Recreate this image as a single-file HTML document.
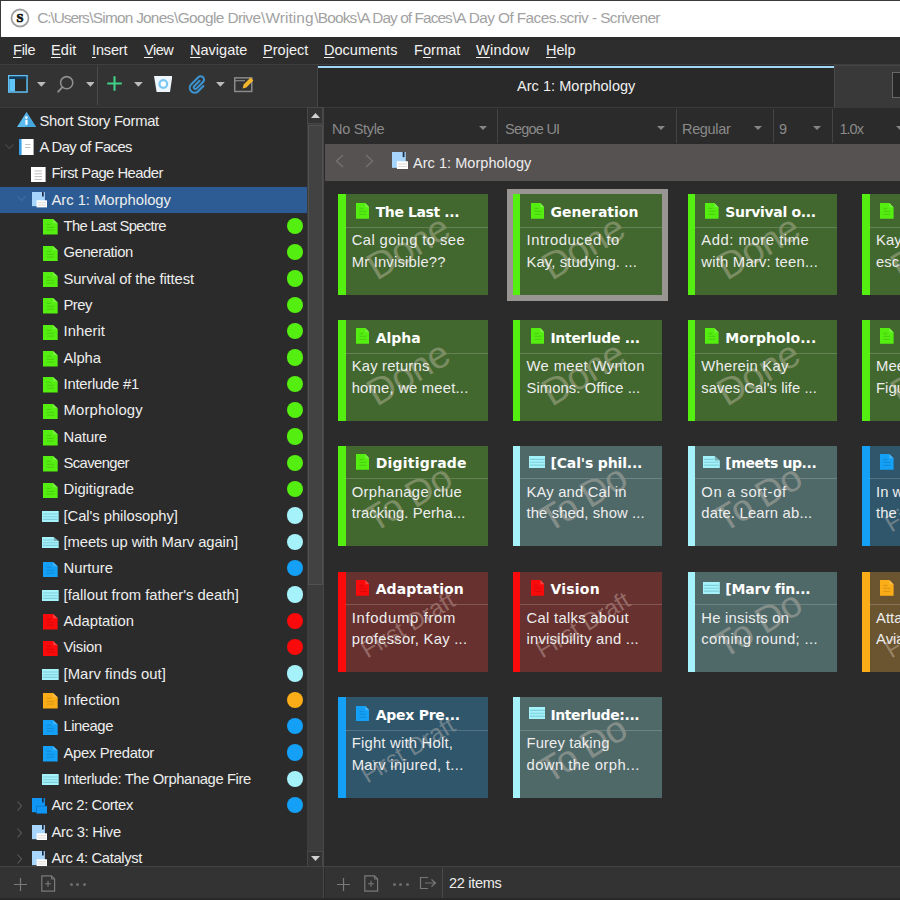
<!DOCTYPE html>
<html lang="en">
<head>
<meta charset="utf-8">
<title>A Day Of Faces.scriv - Scrivener</title>
<style>
html,body{margin:0;padding:0;}
body{width:900px;height:900px;overflow:hidden;position:relative;background:#2b2b2b;font-family:"Liberation Sans",sans-serif;color:#e6e6e6;}
div,span,svg{position:absolute;box-sizing:border-box;}
.t{white-space:nowrap;line-height:20px;height:20px;}
.title{font-size:15.4px;color:#a2a2a2;}
.menu{font-size:14.5px;color:#f2f2f2;}
.menu u{text-decoration:underline;text-underline-offset:2px;text-decoration-thickness:1px;}
.tab{font-size:14.5px;color:#f0f0f0;}
.bind{font-size:14.8px;color:#eeeeee;}
.fmt{font-size:14.5px;color:#8a8a8a;}
.hdr{font-size:14.5px;color:#ededed;}
.foot{font-size:14.5px;color:#ededed;}
.ct{font-family:"DejaVu Sans","Liberation Sans",sans-serif;font-weight:bold;font-size:14px;color:#fff;}
.cb{font-size:14.8px;color:#eeeeee;}
.wm{line-height:40px;height:40px;transform-origin:0 0;transform:rotate(-31deg) translate(-50%,-50%);}
.card{width:149.6px;height:100.5px;overflow:hidden;}
.card .stripe{left:0;top:0;width:7.5px;height:100%;}
.card .sep{left:7px;right:0;top:32.5px;height:1px;background:#ffffff2e;}

</style>
</head>
<body>
<div style="left:0;top:0;width:900px;height:37px;background:#fff"></div>
<div style="left:0;top:0;width:900px;height:1px;background:#3a3a3a"></div>
<div style="left:0;top:0;width:1px;height:37px;background:#3a3a3a"></div>
<svg style="left:10.3px;top:8.2px" width="20" height="20" viewBox="0 0 20 20"><circle cx="10" cy="10" r="8.5" fill="#fff" stroke="#a2a2a2" stroke-width="1.8"/><text x="10" y="14.1" text-anchor="middle" font-family="Liberation Serif,serif" font-weight="bold" font-size="12.5" fill="#111" stroke="#111" stroke-width="0.7">S</text></svg>
<span class="t title" style="left:37.3px;top:8.4px;letter-spacing:-1.057px;">C:\Users</span>
<span class="t title" style="left:89.3px;top:8.4px;letter-spacing:-0.762px;">\Simon Jones</span>
<span class="t title" style="left:174px;top:8.4px;letter-spacing:-0.593px;">\Google Drive</span>
<span class="t title" style="left:261px;top:8.4px;letter-spacing:0.101px;">\Writing</span>
<span class="t title" style="left:314.3px;top:8.4px;letter-spacing:-0.827px;">\Books</span>
<span class="t title" style="left:357px;top:8.4px;letter-spacing:-0.916px;">\A Day of Faces</span>
<span class="t title" style="left:452.5px;top:8.4px;letter-spacing:-0.583px;">\A Day Of Faces.scriv - Scrivener</span>
<div style="left:0;top:37px;width:900px;height:27px;background:#2d2d2d"></div>
<span class="t menu" style="left:13px;top:40px;letter-spacing:-0.244px;"><u>F</u>ile</span>
<span class="t menu" style="left:51px;top:40px;letter-spacing:0.100px;"><u>E</u>dit</span>
<span class="t menu" style="left:92px;top:40px;letter-spacing:-0.147px;"><u>I</u>nsert</span>
<span class="t menu" style="left:144px;top:40px;letter-spacing:-0.447px;"><u>V</u>iew</span>
<span class="t menu" style="left:190px;top:40px;letter-spacing:0.019px;"><u>N</u>avigate</span>
<span class="t menu" style="left:263px;top:40px;letter-spacing:0.037px;"><u>P</u>roject</span>
<span class="t menu" style="left:324px;top:40px;letter-spacing:0.005px;"><u>D</u>ocuments</span>
<span class="t menu" style="left:414px;top:40px;letter-spacing:0.077px;">F<u>o</u>rmat</span>
<span class="t menu" style="left:476px;top:40px;letter-spacing:0.304px;"><u>W</u>indow</span>
<span class="t menu" style="left:546px;top:40px;letter-spacing:-0.111px;"><u>H</u>elp</span>
<div style="left:0;top:64px;width:900px;height:43px;background:#333333"></div>
<div style="left:0;top:64px;width:900px;height:1px;background:#3e3e3e"></div>
<div style="left:97px;top:66px;width:1px;height:39px;background:#4a4a4a"></div>
<div style="left:318px;top:65px;width:516px;height:42px;background:#292929"></div>
<div style="left:317px;top:65px;width:1px;height:42px;background:#454545"></div>
<div style="left:318px;top:65.5px;width:516px;height:2.6px;background:#a0d8f6"></div>
<div style="left:834px;top:65px;width:66px;height:42px;background:#393939;border-left:1px solid #4a4a4a;border-top:1px solid #444"></div>
<div style="left:892px;top:72px;width:10px;height:26px;background:#262626;border:1px solid #666"></div>
<span class="t tab" style="left:517px;top:76px;letter-spacing:0.043px;">Arc 1: Morphology</span>
<svg style="left:8px;top:74.9px" width="19.8" height="17.8" viewBox="0 0 19.8 17.8"><rect x="0.75" y="0.75" width="18.3" height="16.3" fill="#2a2a2a" stroke="#5fc0f5" stroke-width="1.5"/><rect x="1.5" y="1.6" width="16.8" height="2.4" fill="#0e3d60"/><rect x="1.4" y="4" width="5.6" height="12.4" fill="#5fc4f7"/></svg>
<svg style="left:37.2px;top:81.9px" width="8.8" height="4.8" viewBox="0 0 8.8 4.8"><path d="M0 0H8.8L4.4 4.8Z" fill="#bcbcbc"/></svg>
<svg style="left:85.5px;top:81.9px" width="8.8" height="4.8" viewBox="0 0 8.8 4.8"><path d="M0 0H8.8L4.4 4.8Z" fill="#bcbcbc"/></svg>
<svg style="left:134px;top:81.9px" width="8.8" height="4.8" viewBox="0 0 8.8 4.8"><path d="M0 0H8.8L4.4 4.8Z" fill="#bcbcbc"/></svg>
<svg style="left:216.3px;top:81.9px" width="8.8" height="4.8" viewBox="0 0 8.8 4.8"><path d="M0 0H8.8L4.4 4.8Z" fill="#bcbcbc"/></svg>
<svg style="left:56px;top:74px" width="20" height="20" viewBox="0 0 20 20"><circle cx="10.7" cy="8.7" r="6.1" fill="none" stroke="#8e8e8e" stroke-width="1.6"/><path d="M6.4 13.2L2.2 17.7" stroke="#8e8e8e" stroke-width="1.9" stroke-linecap="round"/></svg>
<svg style="left:107.2px;top:76.4px" width="15" height="15" viewBox="0 0 15 15"><path d="M7.5 0.2V14.8M0.2 7.5H14.8" stroke="#40d088" stroke-width="2.1"/></svg>
<svg style="left:153.9px;top:75.8px" width="18.4" height="16" viewBox="0 0 18.4 16"><path d="M0 0H18.4L16 16H2.6Z" fill="#edf6fc"/><circle cx="9.3" cy="8" r="3.8" fill="#fff" stroke="#7cc8f4" stroke-width="2.2"/></svg>
<svg style="left:187px;top:74px" width="20" height="20" viewBox="0 0 20 20"><path d="M12.6 6.8L7.2 12.2a1.6 1.6 0 0 0 2.3 2.3L16 8a3.3 3.3 0 0 0-4.7-4.7L3.9 10.7a4.9 4.9 0 0 0 6.9 6.9L16.4 12" fill="none" stroke="#3c93cf" stroke-width="2.1" stroke-linecap="round"/></svg>
<svg style="left:234.4px;top:74px" width="21" height="19" viewBox="0 0 21 19"><rect x="0.75" y="3.85" width="17" height="13.6" fill="none" stroke="#8a8a8a" stroke-width="1.5"/><path d="M1 6.7H11" stroke="#8a8a8a" stroke-width="1.2"/><path d="M9.6 10.6L16.6 3.6L19.4 6.4L12.4 13.4L8.6 14.4Z" fill="#f0b62e"/></svg>
<div style="left:0;top:107px;width:307px;height:759px;background:#2b2b2b"></div>
<div style="left:0;top:107px;width:900px;height:1px;background:#3a3a3a"></div>
<div style="left:0;top:186.6px;width:307px;height:26.4px;background:#2c5c93"></div>
<span class="t bind" style="left:39.5px;top:110.5px;letter-spacing:-0.311px;">Short Story Format</span>
<svg style="left:17px;top:112.3px" width="19" height="15" viewBox="0 0 19 15"><path d="M9.5 0L19 15H0Z" fill="#5bbcf0"/><path d="M9.5 0L19 15H9.5Z" fill="#46a6e0"/><circle cx="9.5" cy="5.6" r="1.3" fill="#fff"/><path d="M9.5 7.8V12.8" stroke="#fff" stroke-width="2.2"/></svg>
<span class="t bind" style="left:39.5px;top:136.8px;letter-spacing:-0.567px;">A Day of Faces</span>
<svg style="left:19px;top:139.4px" width="14.6" height="16" viewBox="0 0 14.6 16"><rect x="0" y="0" width="14.6" height="16" fill="#fff"/><rect x="0" y="0" width="2.6" height="16" fill="#3a9fe4"/><path d="M6 5.5H11.5M6 8.5H11.5" stroke="#c4c4c4" stroke-width="1"/></svg>
<span class="t bind" style="left:51.5px;top:163.2px;letter-spacing:-0.510px;">First Page Header</span>
<svg style="left:31px;top:166.6px" width="14.6" height="15.6" viewBox="0 0 14.6 15.6"><rect x="0" y="0" width="14.6" height="15.6" fill="#fff"/><path d="M3.5 4H11M3.5 6.8H11M3.5 9.6H11M3.5 12.4H11" stroke="#bdbdbd" stroke-width="1"/></svg>
<span class="t bind" style="left:51.5px;top:189.5px;letter-spacing:-0.040px;">Arc 1: Morphology</span>
<svg style="left:32.1px;top:192.4px" width="15" height="15.4" viewBox="0 0 15 15.4" preserveAspectRatio="none"><path d="M0 0H12.9V14.2H0Z" fill="#a8d5fb"/><path d="M10 0H11.7V4.6H10Z" fill="#1c2c44"/><rect x="4.6" y="8.3" width="10.4" height="7.1" fill="#ffffff"/><path d="M5.6 10.7H14M5.6 13H14" stroke="#dcd6d0" stroke-width="0.9"/></svg>
<span class="t bind" style="left:63.5px;top:215.9px;letter-spacing:-0.643px;">The Last Spectre</span>
<svg style="left:43.1px;top:219.3px" width="14.7" height="15.6" viewBox="0 0 14.7 15.6" preserveAspectRatio="none"><path d="M0 0H10.2L14.7 4.2V15.6H0Z" fill="#55ee11"/><path d="M10.2 0V4.2H14.7Z" fill="#ffffff38"/><path d="M3.6 5.4H8M3.6 8.3H11.2M3.6 11.2H11.2" stroke="#0000001c" stroke-width="1.3"/></svg>
<div style="left:287px;top:217.6px;width:16.4px;height:16.4px;border-radius:50%;background:#55ee11"></div>
<span class="t bind" style="left:63.5px;top:242.2px;letter-spacing:-0.382px;">Generation</span>
<svg style="left:43.1px;top:245.6px" width="14.7" height="15.6" viewBox="0 0 14.7 15.6" preserveAspectRatio="none"><path d="M0 0H10.2L14.7 4.2V15.6H0Z" fill="#55ee11"/><path d="M10.2 0V4.2H14.7Z" fill="#ffffff38"/><path d="M3.6 5.4H8M3.6 8.3H11.2M3.6 11.2H11.2" stroke="#0000001c" stroke-width="1.3"/></svg>
<div style="left:287px;top:243.9px;width:16.4px;height:16.4px;border-radius:50%;background:#55ee11"></div>
<span class="t bind" style="left:63.5px;top:268.5px;letter-spacing:-0.123px;">Survival of the fittest</span>
<svg style="left:43.1px;top:271.9px" width="14.7" height="15.6" viewBox="0 0 14.7 15.6" preserveAspectRatio="none"><path d="M0 0H10.2L14.7 4.2V15.6H0Z" fill="#55ee11"/><path d="M10.2 0V4.2H14.7Z" fill="#ffffff38"/><path d="M3.6 5.4H8M3.6 8.3H11.2M3.6 11.2H11.2" stroke="#0000001c" stroke-width="1.3"/></svg>
<div style="left:287px;top:270.2px;width:16.4px;height:16.4px;border-radius:50%;background:#55ee11"></div>
<span class="t bind" style="left:63.5px;top:294.9px;letter-spacing:-0.509px;">Prey</span>
<svg style="left:43.1px;top:298.3px" width="14.7" height="15.6" viewBox="0 0 14.7 15.6" preserveAspectRatio="none"><path d="M0 0H10.2L14.7 4.2V15.6H0Z" fill="#55ee11"/><path d="M10.2 0V4.2H14.7Z" fill="#ffffff38"/><path d="M3.6 5.4H8M3.6 8.3H11.2M3.6 11.2H11.2" stroke="#0000001c" stroke-width="1.3"/></svg>
<div style="left:287px;top:296.6px;width:16.4px;height:16.4px;border-radius:50%;background:#55ee11"></div>
<span class="t bind" style="left:63.5px;top:321.2px;letter-spacing:0.039px;">Inherit</span>
<svg style="left:43.1px;top:324.6px" width="14.7" height="15.6" viewBox="0 0 14.7 15.6" preserveAspectRatio="none"><path d="M0 0H10.2L14.7 4.2V15.6H0Z" fill="#55ee11"/><path d="M10.2 0V4.2H14.7Z" fill="#ffffff38"/><path d="M3.6 5.4H8M3.6 8.3H11.2M3.6 11.2H11.2" stroke="#0000001c" stroke-width="1.3"/></svg>
<div style="left:287px;top:322.9px;width:16.4px;height:16.4px;border-radius:50%;background:#55ee11"></div>
<span class="t bind" style="left:63.5px;top:347.6px;letter-spacing:-0.092px;">Alpha</span>
<svg style="left:43.1px;top:351.0px" width="14.7" height="15.6" viewBox="0 0 14.7 15.6" preserveAspectRatio="none"><path d="M0 0H10.2L14.7 4.2V15.6H0Z" fill="#55ee11"/><path d="M10.2 0V4.2H14.7Z" fill="#ffffff38"/><path d="M3.6 5.4H8M3.6 8.3H11.2M3.6 11.2H11.2" stroke="#0000001c" stroke-width="1.3"/></svg>
<div style="left:287px;top:349.3px;width:16.4px;height:16.4px;border-radius:50%;background:#55ee11"></div>
<span class="t bind" style="left:63.5px;top:373.9px;letter-spacing:-0.230px;">Interlude #1</span>
<svg style="left:43.1px;top:377.3px" width="14.7" height="15.6" viewBox="0 0 14.7 15.6" preserveAspectRatio="none"><path d="M0 0H10.2L14.7 4.2V15.6H0Z" fill="#55ee11"/><path d="M10.2 0V4.2H14.7Z" fill="#ffffff38"/><path d="M3.6 5.4H8M3.6 8.3H11.2M3.6 11.2H11.2" stroke="#0000001c" stroke-width="1.3"/></svg>
<div style="left:287px;top:375.6px;width:16.4px;height:16.4px;border-radius:50%;background:#55ee11"></div>
<span class="t bind" style="left:63.5px;top:400.2px;letter-spacing:0.207px;">Morphology</span>
<svg style="left:43.1px;top:403.6px" width="14.7" height="15.6" viewBox="0 0 14.7 15.6" preserveAspectRatio="none"><path d="M0 0H10.2L14.7 4.2V15.6H0Z" fill="#55ee11"/><path d="M10.2 0V4.2H14.7Z" fill="#ffffff38"/><path d="M3.6 5.4H8M3.6 8.3H11.2M3.6 11.2H11.2" stroke="#0000001c" stroke-width="1.3"/></svg>
<div style="left:287px;top:401.9px;width:16.4px;height:16.4px;border-radius:50%;background:#55ee11"></div>
<span class="t bind" style="left:63.5px;top:426.6px;letter-spacing:-0.170px;">Nature</span>
<svg style="left:43.1px;top:430.0px" width="14.7" height="15.6" viewBox="0 0 14.7 15.6" preserveAspectRatio="none"><path d="M0 0H10.2L14.7 4.2V15.6H0Z" fill="#55ee11"/><path d="M10.2 0V4.2H14.7Z" fill="#ffffff38"/><path d="M3.6 5.4H8M3.6 8.3H11.2M3.6 11.2H11.2" stroke="#0000001c" stroke-width="1.3"/></svg>
<div style="left:287px;top:428.3px;width:16.4px;height:16.4px;border-radius:50%;background:#55ee11"></div>
<span class="t bind" style="left:63.5px;top:452.9px;letter-spacing:-0.594px;">Scavenger</span>
<svg style="left:43.1px;top:456.3px" width="14.7" height="15.6" viewBox="0 0 14.7 15.6" preserveAspectRatio="none"><path d="M0 0H10.2L14.7 4.2V15.6H0Z" fill="#55ee11"/><path d="M10.2 0V4.2H14.7Z" fill="#ffffff38"/><path d="M3.6 5.4H8M3.6 8.3H11.2M3.6 11.2H11.2" stroke="#0000001c" stroke-width="1.3"/></svg>
<div style="left:287px;top:454.6px;width:16.4px;height:16.4px;border-radius:50%;background:#55ee11"></div>
<span class="t bind" style="left:63.5px;top:479.3px;letter-spacing:-0.030px;">Digitigrade</span>
<svg style="left:43.1px;top:482.7px" width="14.7" height="15.6" viewBox="0 0 14.7 15.6" preserveAspectRatio="none"><path d="M0 0H10.2L14.7 4.2V15.6H0Z" fill="#55ee11"/><path d="M10.2 0V4.2H14.7Z" fill="#ffffff38"/><path d="M3.6 5.4H8M3.6 8.3H11.2M3.6 11.2H11.2" stroke="#0000001c" stroke-width="1.3"/></svg>
<div style="left:287px;top:481.0px;width:16.4px;height:16.4px;border-radius:50%;background:#55ee11"></div>
<span class="t bind" style="left:63.5px;top:505.6px;letter-spacing:-0.062px;">[Cal's philosophy]</span>
<svg style="left:42px;top:510.7px" width="16.7" height="11.1" viewBox="0 0 16.7 11.1" preserveAspectRatio="none"><path d="M0 0H16.7V11.1H0Z" fill="#a6f2fb"/><path d="M1 3H15.7M1 5.7H15.7M1 8.4H15.7" stroke="#7ccfdc" stroke-width="1.1"/></svg>
<div style="left:287px;top:507.3px;width:16.4px;height:16.4px;border-radius:50%;background:#a6f2fb"></div>
<span class="t bind" style="left:63.5px;top:531.9px;letter-spacing:-0.093px;">[meets up with Marv again]</span>
<svg style="left:42px;top:537.0px" width="16.7" height="11.1" viewBox="0 0 16.7 11.1" preserveAspectRatio="none"><path d="M0 0H11.7L16.7 4V11.1H0Z" fill="#a6f2fb"/><path d="M11.7 0V4H16.7Z" fill="#00000045"/><path d="M1 3H10.7M1 5.7H15.7M1 8.4H15.7" stroke="#7ccfdc" stroke-width="1.1"/></svg>
<div style="left:287px;top:533.6px;width:16.4px;height:16.4px;border-radius:50%;background:#a6f2fb"></div>
<span class="t bind" style="left:63.5px;top:558.3px;letter-spacing:0.008px;">Nurture</span>
<svg style="left:43.1px;top:561.7px" width="14.7" height="15.6" viewBox="0 0 14.7 15.6" preserveAspectRatio="none"><path d="M0 0H10.2L14.7 4.2V15.6H0Z" fill="#14a0f6"/><path d="M10.2 0V4.2H14.7Z" fill="#ffffff38"/><path d="M3.6 5.4H8M3.6 8.3H11.2M3.6 11.2H11.2" stroke="#0000001c" stroke-width="1.3"/></svg>
<div style="left:287px;top:560.0px;width:16.4px;height:16.4px;border-radius:50%;background:#14a0f6"></div>
<span class="t bind" style="left:63.5px;top:584.6px;letter-spacing:0.023px;">[fallout from father's death]</span>
<svg style="left:42px;top:589.7px" width="16.7" height="11.1" viewBox="0 0 16.7 11.1" preserveAspectRatio="none"><path d="M0 0H16.7V11.1H0Z" fill="#a6f2fb"/><path d="M1 3H15.7M1 5.7H15.7M1 8.4H15.7" stroke="#7ccfdc" stroke-width="1.1"/></svg>
<div style="left:287px;top:586.3px;width:16.4px;height:16.4px;border-radius:50%;background:#a6f2fb"></div>
<span class="t bind" style="left:63.5px;top:611.0px;letter-spacing:-0.037px;">Adaptation</span>
<svg style="left:43.1px;top:614.4px" width="14.7" height="15.6" viewBox="0 0 14.7 15.6" preserveAspectRatio="none"><path d="M0 0H10.2L14.7 4.2V15.6H0Z" fill="#fa0a0a"/><path d="M10.2 0V4.2H14.7Z" fill="#ffffff38"/><path d="M3.6 5.4H8M3.6 8.3H11.2M3.6 11.2H11.2" stroke="#0000001c" stroke-width="1.3"/></svg>
<div style="left:287px;top:612.7px;width:16.4px;height:16.4px;border-radius:50%;background:#fa0a0a"></div>
<span class="t bind" style="left:63.5px;top:637.3px;letter-spacing:-0.274px;">Vision</span>
<svg style="left:43.1px;top:640.7px" width="14.7" height="15.6" viewBox="0 0 14.7 15.6" preserveAspectRatio="none"><path d="M0 0H10.2L14.7 4.2V15.6H0Z" fill="#fa0a0a"/><path d="M10.2 0V4.2H14.7Z" fill="#ffffff38"/><path d="M3.6 5.4H8M3.6 8.3H11.2M3.6 11.2H11.2" stroke="#0000001c" stroke-width="1.3"/></svg>
<div style="left:287px;top:639.0px;width:16.4px;height:16.4px;border-radius:50%;background:#fa0a0a"></div>
<span class="t bind" style="left:63.5px;top:663.6px;letter-spacing:0.078px;">[Marv finds out]</span>
<svg style="left:42px;top:668.7px" width="16.7" height="11.1" viewBox="0 0 16.7 11.1" preserveAspectRatio="none"><path d="M0 0H16.7V11.1H0Z" fill="#a6f2fb"/><path d="M1 3H15.7M1 5.7H15.7M1 8.4H15.7" stroke="#7ccfdc" stroke-width="1.1"/></svg>
<div style="left:287px;top:665.3px;width:16.4px;height:16.4px;border-radius:50%;background:#a6f2fb"></div>
<span class="t bind" style="left:63.5px;top:690.0px;letter-spacing:0.051px;">Infection</span>
<svg style="left:43.1px;top:693.4px" width="14.7" height="15.6" viewBox="0 0 14.7 15.6" preserveAspectRatio="none"><path d="M0 0H10.2L14.7 4.2V15.6H0Z" fill="#fbad18"/><path d="M10.2 0V4.2H14.7Z" fill="#ffffff38"/><path d="M3.6 5.4H8M3.6 8.3H11.2M3.6 11.2H11.2" stroke="#0000001c" stroke-width="1.3"/></svg>
<div style="left:287px;top:691.7px;width:16.4px;height:16.4px;border-radius:50%;background:#fbad18"></div>
<span class="t bind" style="left:63.5px;top:716.3px;letter-spacing:-0.467px;">Lineage</span>
<svg style="left:43.1px;top:719.7px" width="14.7" height="15.6" viewBox="0 0 14.7 15.6" preserveAspectRatio="none"><path d="M0 0H10.2L14.7 4.2V15.6H0Z" fill="#14a0f6"/><path d="M10.2 0V4.2H14.7Z" fill="#ffffff38"/><path d="M3.6 5.4H8M3.6 8.3H11.2M3.6 11.2H11.2" stroke="#0000001c" stroke-width="1.3"/></svg>
<div style="left:287px;top:718.0px;width:16.4px;height:16.4px;border-radius:50%;background:#14a0f6"></div>
<span class="t bind" style="left:63.5px;top:742.7px;letter-spacing:-0.323px;">Apex Predator</span>
<svg style="left:43.1px;top:746.1px" width="14.7" height="15.6" viewBox="0 0 14.7 15.6" preserveAspectRatio="none"><path d="M0 0H10.2L14.7 4.2V15.6H0Z" fill="#14a0f6"/><path d="M10.2 0V4.2H14.7Z" fill="#ffffff38"/><path d="M3.6 5.4H8M3.6 8.3H11.2M3.6 11.2H11.2" stroke="#0000001c" stroke-width="1.3"/></svg>
<div style="left:287px;top:744.4px;width:16.4px;height:16.4px;border-radius:50%;background:#14a0f6"></div>
<span class="t bind" style="left:63.5px;top:769.0px;letter-spacing:-0.393px;">Interlude: The Orphanage Fire</span>
<svg style="left:42px;top:774.1px" width="16.7" height="11.1" viewBox="0 0 16.7 11.1" preserveAspectRatio="none"><path d="M0 0H16.7V11.1H0Z" fill="#a6f2fb"/><path d="M1 3H15.7M1 5.7H15.7M1 8.4H15.7" stroke="#7ccfdc" stroke-width="1.1"/></svg>
<div style="left:287px;top:770.7px;width:16.4px;height:16.4px;border-radius:50%;background:#a6f2fb"></div>
<span class="t bind" style="left:51.5px;top:795.3px;letter-spacing:-0.380px;">Arc 2: Cortex</span>
<svg style="left:32.1px;top:798.2px" width="15" height="15.4" viewBox="0 0 15 15.4" preserveAspectRatio="none"><path d="M0 0H12.9V14.2H0Z" fill="#1097f5"/><path d="M10 0H11.7V4.6H10Z" fill="#1c2c44"/><rect x="4.1" y="7.8" width="10.9" height="7.6" fill="#0b6fc2"/><rect x="4.8" y="8.5" width="10.2" height="6.9" fill="#1097f5"/></svg>
<div style="left:287px;top:797.0px;width:16.4px;height:16.4px;border-radius:50%;background:#14a0f6"></div>
<span class="t bind" style="left:51.5px;top:821.7px;letter-spacing:-0.269px;">Arc 3: Hive</span>
<svg style="left:32.1px;top:824.6px" width="15" height="15.4" viewBox="0 0 15 15.4" preserveAspectRatio="none"><path d="M0 0H12.9V14.2H0Z" fill="#a8d5fb"/><path d="M10 0H11.7V4.6H10Z" fill="#1c2c44"/><rect x="4.6" y="8.3" width="10.4" height="7.1" fill="#ffffff"/><path d="M5.6 10.7H14M5.6 13H14" stroke="#dcd6d0" stroke-width="0.9"/></svg>
<span class="t bind" style="left:51.5px;top:848.0px;letter-spacing:-0.388px;">Arc 4: Catalyst</span>
<svg style="left:32.1px;top:850.9px" width="15" height="15.4" viewBox="0 0 15 15.4" preserveAspectRatio="none"><path d="M0 0H12.9V14.2H0Z" fill="#a8d5fb"/><path d="M10 0H11.7V4.6H10Z" fill="#1c2c44"/><rect x="4.6" y="8.3" width="10.4" height="7.1" fill="#ffffff"/><path d="M5.6 10.7H14M5.6 13H14" stroke="#dcd6d0" stroke-width="0.9"/></svg>
<svg style="left:5px;top:143.7px" width="9" height="6" viewBox="0 0 9 6"><path d="M0.5 0.5L4.5 4.5L8.5 0.5" fill="none" stroke="#474747" stroke-width="1.1"/></svg>
<svg style="left:17px;top:196.4px" width="9" height="6" viewBox="0 0 9 6"><path d="M0.5 0.5L4.5 4.5L8.5 0.5" fill="none" stroke="#3f6ca4" stroke-width="1.1"/></svg>
<svg style="left:17px;top:801.2px" width="6" height="10" viewBox="0 0 6 10"><path d="M0.5 0.5L4.5 5L0.5 9.5" fill="none" stroke="#5c5c5c" stroke-width="1.1"/></svg>
<svg style="left:17px;top:827.6px" width="6" height="10" viewBox="0 0 6 10"><path d="M0.5 0.5L4.5 5L0.5 9.5" fill="none" stroke="#5c5c5c" stroke-width="1.1"/></svg>
<svg style="left:17px;top:853.9px" width="6" height="10" viewBox="0 0 6 10"><path d="M0.5 0.5L4.5 5L0.5 9.5" fill="none" stroke="#5c5c5c" stroke-width="1.1"/></svg>
<div style="left:307.4px;top:107px;width:16px;height:759.5px;background:#3c3c3c"></div>
<div style="left:307.4px;top:107px;width:16px;height:16.5px;background:#333;border:1px solid #474747"></div>
<svg style="left:310.6px;top:112.5px" width="9" height="5" viewBox="0 0 9 5"><path d="M0 5H9L4.5 0Z" fill="#d0d0d0"/></svg>
<div style="left:307.4px;top:851px;width:16px;height:15.5px;background:#333;border:1px solid #474747"></div>
<svg style="left:310.6px;top:856px" width="9" height="5" viewBox="0 0 9 5"><path d="M0 0H9L4.5 5Z" fill="#d0d0d0"/></svg>
<div style="left:308px;top:124.5px;width:15px;height:460px;background:#424242;border:1px solid #515151"></div>
<div style="left:0;top:866px;width:324px;height:34px;background:#333"></div>
<div style="left:0;top:866px;width:900px;height:1px;background:#444"></div>
<svg style="left:13px;top:876.5px" width="15" height="15" viewBox="0 0 15 15"><path d="M7.5 1V14M1 7.5H14" stroke="#7a7a7a" stroke-width="1.2"/></svg><svg style="left:41px;top:874.5px" width="15" height="17" viewBox="0 0 15 17"><path d="M0.8 0.8H10.4L13.6 4V16.2H0.8Z" fill="none" stroke="#7a7a7a" stroke-width="1.2"/><path d="M10.4 0.8V4H13.6" fill="none" stroke="#7a7a7a" stroke-width="1"/><path d="M7 5.8V11.8M4 8.8H10" stroke="#7a7a7a" stroke-width="1.1"/></svg><div style="left:70.0px;top:882.5px;width:3px;height:3px;border-radius:2px;background:#6e6e6e"></div><div style="left:76.3px;top:882.5px;width:3px;height:3px;border-radius:2px;background:#6e6e6e"></div><div style="left:82.6px;top:882.5px;width:3px;height:3px;border-radius:2px;background:#6e6e6e"></div>
<div style="left:323px;top:107px;width:1.4px;height:793px;background:#484848"></div>
<div style="left:325px;top:108px;width:575px;height:36px;background:#2b2b2b"></div>
<div style="left:497px;top:109px;width:1px;height:34px;background:#444"></div>
<div style="left:676px;top:109px;width:1px;height:34px;background:#444"></div>
<div style="left:773px;top:109px;width:1px;height:34px;background:#444"></div>
<div style="left:832px;top:109px;width:1px;height:34px;background:#444"></div>
<span class="t fmt" style="left:332px;top:119px;letter-spacing:-0.302px;">No Style</span>
<span class="t fmt" style="left:505px;top:119px;letter-spacing:-0.759px;">Segoe UI</span>
<span class="t fmt" style="left:682px;top:119px;letter-spacing:-0.340px;">Regular</span>
<span class="t fmt" style="left:779px;top:119px;letter-spacing:-0.678px;">9</span>
<span class="t fmt" style="left:839.5px;top:119px;letter-spacing:-1.005px;">1.0x</span>
<svg style="left:479px;top:126px" width="8" height="4" viewBox="0 0 8 4"><path d="M0 0H8L4.0 4Z" fill="#858585"/></svg>
<svg style="left:657px;top:126px" width="8" height="4" viewBox="0 0 8 4"><path d="M0 0H8L4.0 4Z" fill="#858585"/></svg>
<svg style="left:754px;top:126px" width="8" height="4" viewBox="0 0 8 4"><path d="M0 0H8L4.0 4Z" fill="#858585"/></svg>
<svg style="left:813px;top:126px" width="8" height="4" viewBox="0 0 8 4"><path d="M0 0H8L4.0 4Z" fill="#858585"/></svg>
<svg style="left:896px;top:126px" width="8" height="4" viewBox="0 0 8 4"><path d="M0 0H8L4.0 4Z" fill="#858585"/></svg>
<div style="left:325px;top:144px;width:575px;height:36.5px;background:#565252"></div>
<svg style="left:335px;top:154px" width="9" height="14" viewBox="0 0 9 14"><path d="M8 1L1.5 7L8 13" fill="none" stroke="#777171" stroke-width="1.4"/></svg>
<svg style="left:365px;top:154px" width="9" height="14" viewBox="0 0 9 14"><path d="M1 1L7.5 7L1 13" fill="none" stroke="#777171" stroke-width="1.4"/></svg>
<svg style="left:391.7px;top:152.2px" width="16" height="17.2" viewBox="0 0 15 15.4" preserveAspectRatio="none"><path d="M0 0H12.9V14.2H0Z" fill="#a8d5fb"/><path d="M10 0H11.7V4.6H10Z" fill="#1c2c44"/><rect x="4.6" y="8.3" width="10.4" height="7.1" fill="#ffffff"/><path d="M5.6 10.7H14M5.6 13H14" stroke="#dcd6d0" stroke-width="0.9"/></svg>
<span class="t hdr" style="left:413px;top:152.6px;letter-spacing:0.043px;">Arc 1: Morphology</span>
<div style="left:325px;top:181px;width:575px;height:685px;background:#2b2b2b"></div>
<div style="left:325px;top:867px;width:575px;height:33px;background:#333"></div>
<svg style="left:336px;top:876.5px" width="15" height="15" viewBox="0 0 15 15"><path d="M7.5 1V14M1 7.5H14" stroke="#7a7a7a" stroke-width="1.2"/></svg><svg style="left:364px;top:874.5px" width="15" height="17" viewBox="0 0 15 17"><path d="M0.8 0.8H10.4L13.6 4V16.2H0.8Z" fill="none" stroke="#7a7a7a" stroke-width="1.2"/><path d="M10.4 0.8V4H13.6" fill="none" stroke="#7a7a7a" stroke-width="1"/><path d="M7 5.8V11.8M4 8.8H10" stroke="#7a7a7a" stroke-width="1.1"/></svg><div style="left:393.0px;top:882.5px;width:3px;height:3px;border-radius:2px;background:#6e6e6e"></div><div style="left:399.3px;top:882.5px;width:3px;height:3px;border-radius:2px;background:#6e6e6e"></div><div style="left:405.6px;top:882.5px;width:3px;height:3px;border-radius:2px;background:#6e6e6e"></div>
<svg style="left:419px;top:876px" width="18" height="14" viewBox="0 0 18 14"><path d="M9 1.5H1.5V12.5H9" fill="none" stroke="#777" stroke-width="1.2"/><path d="M6 7H16M12.5 3.5L16.5 7L12.5 10.5" fill="none" stroke="#777" stroke-width="1.2"/></svg>
<div style="left:442px;top:868px;width:1px;height:31px;background:#4a4a4a"></div>
<span class="t foot" style="left:449px;top:873px;letter-spacing:-0.302px;">22 items</span>
<div class="card" style="left:338.0px;top:194.4px;background:#42672f">
<div class="stripe" style="background:#55ee11"></div>
<div class="sep"></div>
<span class="t wm" style="left:70px;top:53px;letter-spacing:-0.611px;font-size:38px;color:#7b8d63;">Done</span>
<svg style="left:17.8px;top:8.4px" width="13.6" height="15.8" viewBox="0 0 14.7 15.6" preserveAspectRatio="none"><path d="M0 0H10.2L14.7 4.2V15.6H0Z" fill="#55ee11"/><path d="M10.2 0V4.2H14.7Z" fill="#ffffff38"/><path d="M3.6 5.4H8M3.6 8.3H11.2M3.6 11.2H11.2" stroke="#0000001c" stroke-width="1.3"/></svg>
<span class="t ct" style="left:37.7px;top:7.5px;letter-spacing:-0.392px;">The Last ...</span>
<span class="t cb" style="left:13.7px;top:36.0px;letter-spacing:0.403px;">Cal going to see</span>
<span class="t cb" style="left:13.7px;top:57.6px;letter-spacing:0.194px;">Mr Invisible??</span>
</div>
<div style="left:506.9px;top:188.9px;width:161.3px;height:111.8px;background:#989592"></div>
<div class="card" style="left:512.8px;top:194.4px;background:#42672f">
<div class="stripe" style="background:#55ee11"></div>
<div class="sep"></div>
<span class="t wm" style="left:70px;top:53px;letter-spacing:-0.611px;font-size:38px;color:#7b8d63;">Done</span>
<svg style="left:17.8px;top:8.4px" width="13.6" height="15.8" viewBox="0 0 14.7 15.6" preserveAspectRatio="none"><path d="M0 0H10.2L14.7 4.2V15.6H0Z" fill="#55ee11"/><path d="M10.2 0V4.2H14.7Z" fill="#ffffff38"/><path d="M3.6 5.4H8M3.6 8.3H11.2M3.6 11.2H11.2" stroke="#0000001c" stroke-width="1.3"/></svg>
<span class="t ct" style="left:37.7px;top:7.5px;letter-spacing:0.011px;">Generation</span>
<span class="t cb" style="left:13.7px;top:36.0px;letter-spacing:0.539px;">Introduced to</span>
<span class="t cb" style="left:13.7px;top:57.6px;letter-spacing:0.117px;">Kay, studying. ...</span>
</div>
<div class="card" style="left:687.6px;top:194.4px;background:#42672f">
<div class="stripe" style="background:#55ee11"></div>
<div class="sep"></div>
<span class="t wm" style="left:70px;top:53px;letter-spacing:-0.611px;font-size:38px;color:#7b8d63;">Done</span>
<svg style="left:17.8px;top:8.4px" width="13.6" height="15.8" viewBox="0 0 14.7 15.6" preserveAspectRatio="none"><path d="M0 0H10.2L14.7 4.2V15.6H0Z" fill="#55ee11"/><path d="M10.2 0V4.2H14.7Z" fill="#ffffff38"/><path d="M3.6 5.4H8M3.6 8.3H11.2M3.6 11.2H11.2" stroke="#0000001c" stroke-width="1.3"/></svg>
<span class="t ct" style="left:37.7px;top:7.5px;letter-spacing:-0.331px;">Survival o...</span>
<span class="t cb" style="left:13.7px;top:36.0px;letter-spacing:0.548px;">Add: more time</span>
<span class="t cb" style="left:13.7px;top:57.6px;letter-spacing:0.224px;">with Marv: teen...</span>
</div>
<div class="card" style="left:862.4px;top:194.4px;background:#42672f">
<div class="stripe" style="background:#55ee11"></div>
<div class="sep"></div>
<span class="t wm" style="left:70px;top:53px;letter-spacing:-0.611px;font-size:38px;color:#7b8d63;">Done</span>
<svg style="left:17.8px;top:8.4px" width="13.6" height="15.8" viewBox="0 0 14.7 15.6" preserveAspectRatio="none"><path d="M0 0H10.2L14.7 4.2V15.6H0Z" fill="#55ee11"/><path d="M10.2 0V4.2H14.7Z" fill="#ffffff38"/><path d="M3.6 5.4H8M3.6 8.3H11.2M3.6 11.2H11.2" stroke="#0000001c" stroke-width="1.3"/></svg>
<span class="t cb" style="left:13.7px;top:36.0px;">Kay, st</span>
<span class="t cb" style="left:13.7px;top:57.6px;">escape</span>
</div>
<div class="card" style="left:338.0px;top:320.1px;background:#42672f">
<div class="stripe" style="background:#55ee11"></div>
<div class="sep"></div>
<span class="t wm" style="left:70px;top:53px;letter-spacing:-0.611px;font-size:38px;color:#7b8d63;">Done</span>
<svg style="left:17.8px;top:8.4px" width="13.6" height="15.8" viewBox="0 0 14.7 15.6" preserveAspectRatio="none"><path d="M0 0H10.2L14.7 4.2V15.6H0Z" fill="#55ee11"/><path d="M10.2 0V4.2H14.7Z" fill="#ffffff38"/><path d="M3.6 5.4H8M3.6 8.3H11.2M3.6 11.2H11.2" stroke="#0000001c" stroke-width="1.3"/></svg>
<span class="t ct" style="left:37.7px;top:7.5px;letter-spacing:-0.016px;">Alpha</span>
<span class="t cb" style="left:13.7px;top:36.0px;letter-spacing:0.193px;">Kay returns</span>
<span class="t cb" style="left:13.7px;top:57.6px;letter-spacing:0.206px;">home, we meet...</span>
</div>
<div class="card" style="left:512.8px;top:320.1px;background:#42672f">
<div class="stripe" style="background:#55ee11"></div>
<div class="sep"></div>
<span class="t wm" style="left:70px;top:53px;letter-spacing:-0.611px;font-size:38px;color:#7b8d63;">Done</span>
<svg style="left:17.8px;top:8.4px" width="13.6" height="15.8" viewBox="0 0 14.7 15.6" preserveAspectRatio="none"><path d="M0 0H10.2L14.7 4.2V15.6H0Z" fill="#55ee11"/><path d="M10.2 0V4.2H14.7Z" fill="#ffffff38"/><path d="M3.6 5.4H8M3.6 8.3H11.2M3.6 11.2H11.2" stroke="#0000001c" stroke-width="1.3"/></svg>
<span class="t ct" style="left:37.7px;top:7.5px;letter-spacing:-0.322px;">Interlude ...</span>
<span class="t cb" style="left:13.7px;top:36.0px;letter-spacing:0.372px;">We meet Wynton</span>
<span class="t cb" style="left:13.7px;top:57.6px;letter-spacing:0.073px;">Simons. Office ...</span>
</div>
<div class="card" style="left:687.6px;top:320.1px;background:#42672f">
<div class="stripe" style="background:#55ee11"></div>
<div class="sep"></div>
<span class="t wm" style="left:70px;top:53px;letter-spacing:-0.611px;font-size:38px;color:#7b8d63;">Done</span>
<svg style="left:17.8px;top:8.4px" width="13.6" height="15.8" viewBox="0 0 14.7 15.6" preserveAspectRatio="none"><path d="M0 0H10.2L14.7 4.2V15.6H0Z" fill="#55ee11"/><path d="M10.2 0V4.2H14.7Z" fill="#ffffff38"/><path d="M3.6 5.4H8M3.6 8.3H11.2M3.6 11.2H11.2" stroke="#0000001c" stroke-width="1.3"/></svg>
<span class="t ct" style="left:37.7px;top:7.5px;letter-spacing:0.060px;">Morpholo...</span>
<span class="t cb" style="left:13.7px;top:36.0px;letter-spacing:0.235px;">Wherein Kay</span>
<span class="t cb" style="left:13.7px;top:57.6px;letter-spacing:0.046px;">saves Cal's life ...</span>
</div>
<div class="card" style="left:862.4px;top:320.1px;background:#42672f">
<div class="stripe" style="background:#55ee11"></div>
<div class="sep"></div>
<span class="t wm" style="left:70px;top:53px;letter-spacing:-0.611px;font-size:38px;color:#7b8d63;">Done</span>
<svg style="left:17.8px;top:8.4px" width="13.6" height="15.8" viewBox="0 0 14.7 15.6" preserveAspectRatio="none"><path d="M0 0H10.2L14.7 4.2V15.6H0Z" fill="#55ee11"/><path d="M10.2 0V4.2H14.7Z" fill="#ffffff38"/><path d="M3.6 5.4H8M3.6 8.3H11.2M3.6 11.2H11.2" stroke="#0000001c" stroke-width="1.3"/></svg>
<span class="t cb" style="left:13.7px;top:36.0px;">Meet</span>
<span class="t cb" style="left:13.7px;top:57.6px;">Figure</span>
</div>
<div class="card" style="left:338.0px;top:445.8px;background:#42672f">
<div class="stripe" style="background:#55ee11"></div>
<div class="sep"></div>
<span class="t wm" style="left:70px;top:53px;letter-spacing:-0.451px;font-size:37px;color:#7b8d63;">To Do</span>
<svg style="left:17.8px;top:8.4px" width="13.6" height="15.8" viewBox="0 0 14.7 15.6" preserveAspectRatio="none"><path d="M0 0H10.2L14.7 4.2V15.6H0Z" fill="#55ee11"/><path d="M10.2 0V4.2H14.7Z" fill="#ffffff38"/><path d="M3.6 5.4H8M3.6 8.3H11.2M3.6 11.2H11.2" stroke="#0000001c" stroke-width="1.3"/></svg>
<span class="t ct" style="left:37.7px;top:7.5px;letter-spacing:0.225px;">Digitigrade</span>
<span class="t cb" style="left:13.7px;top:36.0px;letter-spacing:0.363px;">Orphanage clue</span>
<span class="t cb" style="left:13.7px;top:57.6px;letter-spacing:0.102px;">tracking. Perha...</span>
</div>
<div class="card" style="left:512.8px;top:445.8px;background:#4f6969">
<div class="stripe" style="background:#a6f2fb"></div>
<div class="sep"></div>
<span class="t wm" style="left:70px;top:53px;letter-spacing:-0.451px;font-size:37px;color:#848e89;">To Do</span>
<svg style="left:15.9px;top:10.0px" width="16.8" height="12.2" viewBox="0 0 16.7 11.1" preserveAspectRatio="none"><path d="M0 0H16.7V11.1H0Z" fill="#a6f2fb"/><path d="M1 3H15.7M1 5.7H15.7M1 8.4H15.7" stroke="#7ccfdc" stroke-width="1.1"/></svg>
<span class="t ct" style="left:37.7px;top:7.5px;letter-spacing:-0.154px;">[Cal's phil...</span>
<span class="t cb" style="left:13.7px;top:36.0px;letter-spacing:0.177px;">KAy and Cal in</span>
<span class="t cb" style="left:13.7px;top:57.6px;letter-spacing:0.129px;">the shed, show ...</span>
</div>
<div class="card" style="left:687.6px;top:445.8px;background:#4f6969">
<div class="stripe" style="background:#a6f2fb"></div>
<div class="sep"></div>
<span class="t wm" style="left:70px;top:53px;letter-spacing:-0.451px;font-size:37px;color:#848e89;">To Do</span>
<svg style="left:15.9px;top:10.0px" width="16.8" height="12.2" viewBox="0 0 16.7 11.1" preserveAspectRatio="none"><path d="M0 0H11.7L16.7 4V11.1H0Z" fill="#a6f2fb"/><path d="M11.7 0V4H16.7Z" fill="#00000045"/><path d="M1 3H10.7M1 5.7H15.7M1 8.4H15.7" stroke="#7ccfdc" stroke-width="1.1"/></svg>
<span class="t ct" style="left:37.7px;top:7.5px;letter-spacing:-0.394px;">[meets up...</span>
<span class="t cb" style="left:13.7px;top:36.0px;letter-spacing:0.606px;">On a sort-of</span>
<span class="t cb" style="left:13.7px;top:57.6px;letter-spacing:0.195px;">date. Learn ab...</span>
</div>
<div class="card" style="left:862.4px;top:445.8px;background:#2f566b">
<div class="stripe" style="background:#14a0f6"></div>
<div class="sep"></div>
<span class="t wm" style="left:70px;top:53px;letter-spacing:-0.084px;font-size:24px;color:#6f828b;">First Draft</span>
<svg style="left:17.8px;top:8.4px" width="13.6" height="15.8" viewBox="0 0 14.7 15.6" preserveAspectRatio="none"><path d="M0 0H10.2L14.7 4.2V15.6H0Z" fill="#14a0f6"/><path d="M10.2 0V4.2H14.7Z" fill="#ffffff38"/><path d="M3.6 5.4H8M3.6 8.3H11.2M3.6 11.2H11.2" stroke="#0000001c" stroke-width="1.3"/></svg>
<span class="t cb" style="left:13.7px;top:36.0px;">In wh</span>
<span class="t cb" style="left:13.7px;top:57.6px;">the s</span>
</div>
<div class="card" style="left:338.0px;top:571.5px;background:#673130">
<div class="stripe" style="background:#fa0a0a"></div>
<div class="sep"></div>
<span class="t wm" style="left:70px;top:53px;letter-spacing:-0.084px;font-size:24px;color:#946964;">First Draft</span>
<svg style="left:17.8px;top:8.4px" width="13.6" height="15.8" viewBox="0 0 14.7 15.6" preserveAspectRatio="none"><path d="M0 0H10.2L14.7 4.2V15.6H0Z" fill="#fa0a0a"/><path d="M10.2 0V4.2H14.7Z" fill="#ffffff38"/><path d="M3.6 5.4H8M3.6 8.3H11.2M3.6 11.2H11.2" stroke="#0000001c" stroke-width="1.3"/></svg>
<span class="t ct" style="left:37.7px;top:7.5px;letter-spacing:0.045px;">Adaptation</span>
<span class="t cb" style="left:13.7px;top:36.0px;letter-spacing:0.684px;">Infodump from</span>
<span class="t cb" style="left:13.7px;top:57.6px;letter-spacing:0.254px;">professor, Kay ...</span>
</div>
<div class="card" style="left:512.8px;top:571.5px;background:#673130">
<div class="stripe" style="background:#fa0a0a"></div>
<div class="sep"></div>
<span class="t wm" style="left:70px;top:53px;letter-spacing:-0.084px;font-size:24px;color:#946964;">First Draft</span>
<svg style="left:17.8px;top:8.4px" width="13.6" height="15.8" viewBox="0 0 14.7 15.6" preserveAspectRatio="none"><path d="M0 0H10.2L14.7 4.2V15.6H0Z" fill="#fa0a0a"/><path d="M10.2 0V4.2H14.7Z" fill="#ffffff38"/><path d="M3.6 5.4H8M3.6 8.3H11.2M3.6 11.2H11.2" stroke="#0000001c" stroke-width="1.3"/></svg>
<span class="t ct" style="left:37.7px;top:7.5px;letter-spacing:0.215px;">Vision</span>
<span class="t cb" style="left:13.7px;top:36.0px;letter-spacing:0.301px;">Cal talks about</span>
<span class="t cb" style="left:13.7px;top:57.6px;letter-spacing:0.233px;">invisibility and ...</span>
</div>
<div class="card" style="left:687.6px;top:571.5px;background:#4f6969">
<div class="stripe" style="background:#a6f2fb"></div>
<div class="sep"></div>
<span class="t wm" style="left:70px;top:53px;letter-spacing:-0.451px;font-size:37px;color:#848e89;">To Do</span>
<svg style="left:15.9px;top:10.0px" width="16.8" height="12.2" viewBox="0 0 16.7 11.1" preserveAspectRatio="none"><path d="M0 0H16.7V11.1H0Z" fill="#a6f2fb"/><path d="M1 3H15.7M1 5.7H15.7M1 8.4H15.7" stroke="#7ccfdc" stroke-width="1.1"/></svg>
<span class="t ct" style="left:37.7px;top:7.5px;letter-spacing:-0.199px;">[Marv fin...</span>
<span class="t cb" style="left:13.7px;top:36.0px;letter-spacing:0.252px;">He insists on</span>
<span class="t cb" style="left:13.7px;top:57.6px;letter-spacing:0.387px;">coming round; ...</span>
</div>
<div class="card" style="left:862.4px;top:571.5px;background:#6b5530">
<div class="stripe" style="background:#fbad18"></div>
<div class="sep"></div>
<span class="t wm" style="left:70px;top:53px;letter-spacing:-0.084px;font-size:24px;color:#978164;">First Draft</span>
<svg style="left:17.8px;top:8.4px" width="13.6" height="15.8" viewBox="0 0 14.7 15.6" preserveAspectRatio="none"><path d="M0 0H10.2L14.7 4.2V15.6H0Z" fill="#fbad18"/><path d="M10.2 0V4.2H14.7Z" fill="#ffffff38"/><path d="M3.6 5.4H8M3.6 8.3H11.2M3.6 11.2H11.2" stroke="#0000001c" stroke-width="1.3"/></svg>
<span class="t cb" style="left:13.7px;top:36.0px;">Attac</span>
<span class="t cb" style="left:13.7px;top:57.6px;">Avian</span>
</div>
<div class="card" style="left:338.0px;top:697.2px;background:#2f566b">
<div class="stripe" style="background:#14a0f6"></div>
<div class="sep"></div>
<span class="t wm" style="left:70px;top:53px;letter-spacing:-0.084px;font-size:24px;color:#6f828b;">First Draft</span>
<svg style="left:17.8px;top:8.4px" width="13.6" height="15.8" viewBox="0 0 14.7 15.6" preserveAspectRatio="none"><path d="M0 0H10.2L14.7 4.2V15.6H0Z" fill="#14a0f6"/><path d="M10.2 0V4.2H14.7Z" fill="#ffffff38"/><path d="M3.6 5.4H8M3.6 8.3H11.2M3.6 11.2H11.2" stroke="#0000001c" stroke-width="1.3"/></svg>
<span class="t ct" style="left:37.7px;top:7.5px;letter-spacing:-0.252px;">Apex Pre...</span>
<span class="t cb" style="left:13.7px;top:36.0px;letter-spacing:0.221px;">Fight with Holt,</span>
<span class="t cb" style="left:13.7px;top:57.6px;letter-spacing:0.323px;">Marv injured, t...</span>
</div>
<div class="card" style="left:512.8px;top:697.2px;background:#4f6969">
<div class="stripe" style="background:#a6f2fb"></div>
<div class="sep"></div>
<span class="t wm" style="left:70px;top:53px;letter-spacing:-0.451px;font-size:37px;color:#848e89;">To Do</span>
<svg style="left:15.9px;top:10.0px" width="16.8" height="12.2" viewBox="0 0 16.7 11.1" preserveAspectRatio="none"><path d="M0 0H16.7V11.1H0Z" fill="#a6f2fb"/><path d="M1 3H15.7M1 5.7H15.7M1 8.4H15.7" stroke="#7ccfdc" stroke-width="1.1"/></svg>
<span class="t ct" style="left:37.7px;top:7.5px;letter-spacing:-0.416px;">Interlude:...</span>
<span class="t cb" style="left:13.7px;top:36.0px;letter-spacing:0.132px;">Furey taking</span>
<span class="t cb" style="left:13.7px;top:57.6px;letter-spacing:0.448px;">down the orph...</span>
</div>
<div style="left:0;top:897.6px;width:900px;height:2.4px;background:#282828"></div>
</body>
</html>
